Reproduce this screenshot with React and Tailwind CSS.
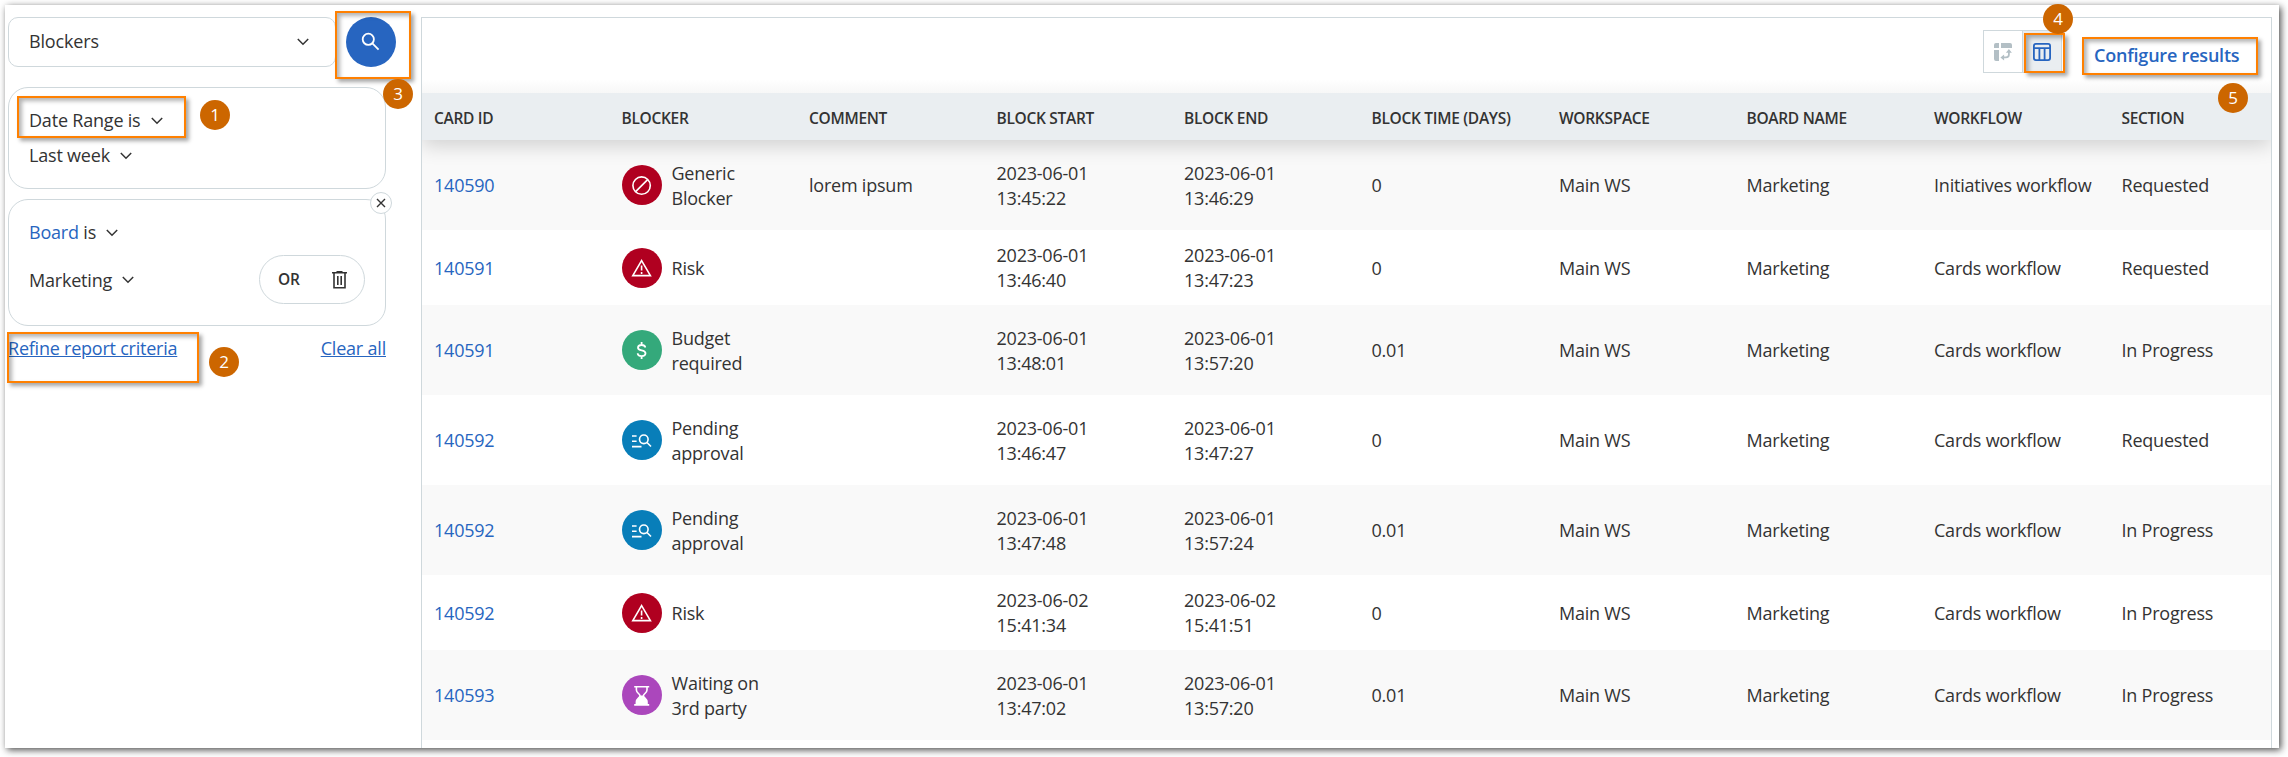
import React from "react";

const columns = [
  "Card ID", "Blocker", "Comment", "Block start", "Block end",
  "Block time (days)", "Workspace", "Board name", "Workflow", "Section",
];

const rows = [
  { id: "140590", kind: "generic", name: ["Generic", "Blocker"], comment: "lorem ipsum", start: ["2023-06-01", "13:45:22"], end: ["2023-06-01", "13:46:29"], time: "0", flow: "Initiatives workflow", section: "Requested" },
  { id: "140591", kind: "risk", name: ["Risk"], start: ["2023-06-01", "13:46:40"], end: ["2023-06-01", "13:47:23"], time: "0", flow: "Cards workflow", section: "Requested" },
  { id: "140591", kind: "budget", name: ["Budget", "required"], start: ["2023-06-01", "13:48:01"], end: ["2023-06-01", "13:57:20"], time: "0.01", flow: "Cards workflow", section: "In Progress" },
  { id: "140592", kind: "pending", name: ["Pending", "approval"], start: ["2023-06-01", "13:46:47"], end: ["2023-06-01", "13:47:27"], time: "0", flow: "Cards workflow", section: "Requested" },
  { id: "140592", kind: "pending", name: ["Pending", "approval"], start: ["2023-06-01", "13:47:48"], end: ["2023-06-01", "13:57:24"], time: "0.01", flow: "Cards workflow", section: "In Progress" },
  { id: "140592", kind: "risk", name: ["Risk"], start: ["2023-06-02", "15:41:34"], end: ["2023-06-02", "15:41:51"], time: "0", flow: "Cards workflow", section: "In Progress" },
  { id: "140593", kind: "waiting", name: ["Waiting on", "3rd party"], start: ["2023-06-01", "13:47:02"], end: ["2023-06-01", "13:57:20"], time: "0.01", flow: "Cards workflow", section: "In Progress" },
];

const kindColor = {
  generic: "bg-[#b00020]",
  risk: "bg-[#b00020]",
  budget: "bg-[#34a97b]",
  pending: "bg-[#087eb9]",
  waiting: "bg-[#ab47bc]",
};

function KindGlyph({ kind }) {
  return (
    <svg viewBox="0 0 40 40" className="size-10" fill="none" stroke="white" strokeWidth="1.6">
      {kind === "generic" && (
        <>
          <circle cx="19.6" cy="20.6" r="8.7" />
          <path d="M13.6 26.6 25.6 14.6" />
        </>
      )}
      {kind === "risk" && (
        <>
          <path d="M19.6 12.6 28.4 27.6H10.8Z" />
          <path d="M19.6 17.5v5M19.6 24v2" />
        </>
      )}
      {kind === "budget" && (
        <path strokeWidth="1.8" d="M19.6 12v3M19.6 26v3M23.2 17.6c0-1.6-1.4-2.6-3.6-2.6s-3.6 1-3.6 2.7c0 3.9 7.5 1.6 7.5 5.6 0 1.7-1.6 2.8-3.9 2.8s-3.9-1.1-3.9-2.8" />
      )}
      {kind === "pending" && (
        <>
          <circle cx="21.8" cy="19.3" r="4.3" />
          <path d="m25 22.5 4 4M10 16h4.6M10 21.2h4.6M10 26.6h9.5" />
        </>
      )}
      {kind === "waiting" && (
        <>
          <path d="M12.2 11.8h15M12.2 29.9h15" />
          <path d="M14.4 12v3c0 3 3.6 3.8 3.6 5.8s-3.6 3-3.6 6v3M25 12v3c0 3-3.6 3.8-3.6 5.8s3.6 3 3.6 6v3" />
          <path fill="white" stroke="none" d="M14.4 30v-3.4c0-3 3.4-4 3.6-6h3.4c.2 2 3.6 3 3.6 6V30Z" />
        </>
      )}
    </svg>
  );
}

function Chevron() {
  return (
    <svg viewBox="0 0 12 8" className="h-2 w-3 shrink-0" fill="none" stroke="#333" strokeWidth="1.5">
      <path d="m.8 1 5.2 5.2L11.2 1" />
    </svg>
  );
}

function Badge({ n, className }) {
  return (
    <div className={"absolute z-20 flex size-[30px] items-center justify-center rounded-full bg-[#cc6600] pb-px text-[17px] leading-none text-white " + className}>
      {n}
    </div>
  );
}

function Frame({ className }) {
  return (
    <div className={"pointer-events-none absolute z-10 border-2 border-[#ff8000] shadow-[3px_3px_4px_rgba(0,0,0,.35),inset_3px_3px_4px_rgba(0,0,0,.3)] " + className} />
  );
}

function Sidebar() {
  return (
    <aside className="flex w-[416px] shrink-0 flex-col pt-3 pl-[3px]">
      <div className="relative flex gap-[10px]">
        <div className="flex h-[50px] w-[328px] items-center justify-between rounded-[10px] border border-[#cfd8dc] pr-[26px] pb-px pl-[20px]">
          <span className="tracking-[-0.15px]">Blockers</span>
          <Chevron />
        </div>
        <button className="flex size-[50px] items-center justify-center rounded-full bg-[#2765c0]">
          <svg viewBox="0 0 50 50" className="size-[50px]" fill="none" stroke="white" strokeWidth="1.8">
            <circle cx="22.3" cy="22.3" r="5.6" />
            <path d="m26.4 26.4 6.2 6.2" />
          </svg>
        </button>
        <Frame className="top-[-6px] left-[327px] h-[68px] w-[76px]" />
        <Badge n="3" className="top-[62px] left-[375px]" />
      </div>

      <div className="relative mt-5 flex h-[102px] w-[378px] flex-col rounded-[20px] border border-[#cfd8dc] pt-5 pl-[20px]">
        <div className="flex h-[25px] items-center gap-[10px]"><span className="tracking-[-0.2px]">Date Range is</span><Chevron /></div>
        <div className="mt-[10px] flex h-[25px] items-center gap-[10px]"><span className="tracking-[-0.2px]">Last week</span><Chevron /></div>
        <Frame className="top-[8px] left-[8px] h-[42px] w-[169px]" />
        <Badge n="1" className="top-[12px] left-[191px]" />
      </div>

      <div className="relative mt-[10px] flex h-[127px] w-[378px] flex-col rounded-[20px] border border-[#cfd8dc] pt-5 pl-[20px]">
        <div className="flex h-[25px] items-center gap-[10px]"><span className="tracking-[-0.2px]"><span className="text-[#2765c0]">Board</span> is</span><Chevron /></div>
        <div className="mt-[10px] flex h-[49px] items-center justify-between pr-5">
          <div className="flex items-center gap-[10px] pt-px"><span className="tracking-[-0.2px]">Marketing</span><Chevron /></div>
          <div className="flex h-[49px] w-[106px] items-center justify-between rounded-full border border-[#cfd8dc] pr-[17px] pl-[18px]">
            <span className="text-[15.5px] font-semibold tracking-[-0.3px]">OR</span>
            <svg viewBox="0 0 15 18" className="h-[18px] w-[15px]" fill="none" stroke="#333" strokeWidth="1.6">
              <path d="M0 1.8h15M4.5 .8h6M2 2v14.8h11V2M5.8 5v9M9.2 5v9" />
            </svg>
          </div>
        </div>
        <button className="absolute top-[-8px] left-[361px] flex size-[22px] items-center justify-center rounded-full border border-[#cfd8dc] bg-white">
          <svg viewBox="0 0 10 10" className="size-[10px]" stroke="#333" strokeWidth="1.4"><path d="m1 1 8 8M9 1 1 9" /></svg>
        </button>
      </div>

      <div className="relative mt-[10px] flex h-[25px] w-[378px] items-center justify-between text-[#2765c0]">
        <a className="tracking-[-0.23px] underline">Refine report criteria</a>
        <a className="tracking-[-0.2px] underline">Clear all</a>
        <Frame className="top-[-4px] left-[-1px] h-[51px] w-[192px]" />
        <Badge n="2" className="top-[11px] left-[201px]" />
      </div>
    </aside>
  );
}

function Toolbar() {
  return (
    <div className="relative flex h-[75px] items-start justify-end bg-[linear-gradient(to_top,#f7f7f7,#fff_14px)] pr-[32px]">
      <div className="mt-3 flex h-[43px] border border-[#cfd8dc]">
        <div className="flex w-[39px] items-center justify-center border-r border-[#cfd8dc] pt-px">
          <svg viewBox="0 0 18 18" className="size-[18px]" fill="#b3bfc5">
            <path d="M2 0h3v5H0V2a2 2 0 0 1 2-2ZM7 0h9a2 2 0 0 1 2 2v3H7ZM0 7h5v11H2a2 2 0 0 1-2-2Z" />
            <path d="M8.5 14.4H12a2.9 2.9 0 0 0 2.9-2.9V8.5" fill="none" stroke="#b3bfc5" strokeWidth="1.8" />
            <path d="m14.9 6 3 3.7h-6ZM6.4 14.4l3.7-3v6Z" />
          </svg>
        </div>
        <div className="flex w-[38px] items-center justify-center bg-[#eaeef1] pt-px">
          <svg viewBox="0 0 18 18" className="size-[18px]" fill="none" stroke="#2765c0" strokeWidth="1.8">
            <rect x=".9" y=".9" width="16.2" height="16.2" rx="2" />
            <path d="M1 5.2h16M6.4 5.2V17M11.6 5.2V17" />
          </svg>
        </div>
      </div>
      <a className="mt-[25px] ml-[32px] w-[145px] text-[18px] font-semibold tracking-[-0.2px] whitespace-nowrap text-[#2765c0]">Configure results</a>
      <Frame className="top-[15px] left-[1602px] h-[40px] w-[41px]" />
      <Frame className="top-[19px] left-[1660px] h-[38px] w-[176px]" />
      <Badge n="4" className="top-[-14px] left-[1621px]" />
      <Badge n="5" className="top-[65px] left-[1796px]" />
    </div>
  );
}

const grid = "grid grid-cols-[repeat(9,187.5px)_1fr] items-center *:pl-3";

function Lines({ items }) {
  return <div className="pt-px">{items.map((t) => <div key={t}>{t}</div>)}</div>;
}

function Results() {
  return (
    <main className="mt-3 mr-[7px] flex grow flex-col border-x border-t border-[#cfd8dc]">
      <Toolbar />
      <div className={"relative z-[1] h-[47px] bg-[#eaeef1] pt-[3px] text-[15.5px] font-semibold tracking-[-0.3px] uppercase shadow-[0_6px_20px_rgba(0,0,0,.16)] [clip-path:inset(0_0_-30px_0)] " + grid}>
        {columns.map((c) => <div key={c} className="whitespace-nowrap">{c}</div>)}
      </div>
      {rows.map((r, i) => (
        <div key={i} className={grid + " tracking-[-0.22px] " + (i % 2 ? "bg-white " : "bg-[#f9f9f9] ") + (r.name.length > 1 ? "h-[90px]" : "h-[75px]")}>
          <div className="pt-px text-[#2765c0]">{r.id}</div>
          <div className="flex items-center gap-[10px]">
            <span className={"rounded-full " + kindColor[r.kind]}><KindGlyph kind={r.kind} /></span>
            <Lines items={r.name} />
          </div>
          <div className="pt-px">{r.comment}</div>
          <Lines items={r.start} />
          <Lines items={r.end} />
          <div className="pt-px">{r.time}</div>
          <div className="pt-px">Main WS</div>
          <div className="pt-px">Marketing</div>
          <div className="pt-px whitespace-nowrap">{r.flow}</div>
          <div className="pt-px">{r.section}</div>
        </div>
      ))}
    </main>
  );
}

export default function App() {
  return (
    <div className="h-[757px] w-[2288px] overflow-hidden bg-white pt-[5px] pl-[5px] font-['Open_Sans',sans-serif] text-[18px] leading-[25px] text-[#333]">
      <div className="flex h-[743px] w-[2274px] bg-white shadow-[2px_2px_7px_rgba(0,0,0,.7)]">
        <Sidebar />
        <Results />
      </div>
    </div>
  );
}
